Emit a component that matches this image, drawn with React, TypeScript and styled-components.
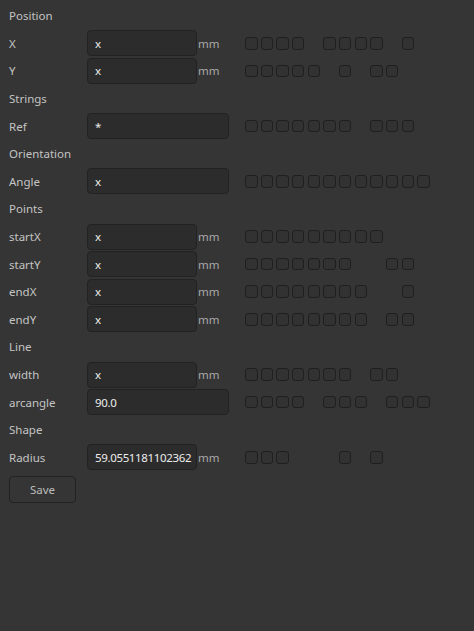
import React from "react";
import styled, { createGlobalStyle } from "styled-components";

const GlobalStyle = createGlobalStyle`
  html, body {
    margin: 0;
    padding: 0;
    background: #353535;
    height: 100%;
  }
  #root {
    min-height: 100%;
  }
`;

type Field = {
  label: string;
  value: string;
  unit?: boolean;
  boxes: number[];
};

type Section = {
  title: string;
  fields: Field[];
};

const range = (a: number, b: number) =>
  Array.from({ length: b - a + 1 }, (_, i) => a + i);

const sections: Section[] = [
  {
    title: "Position",
    fields: [
      { label: "X", value: "x", unit: true, boxes: [...range(0, 3), ...range(5, 8), 10] },
      { label: "Y", value: "x", unit: true, boxes: [...range(0, 4), 6, 8, 9] },
    ],
  },
  {
    title: "Strings",
    fields: [{ label: "Ref", value: "*", boxes: [...range(0, 6), 8, 9, 10] }],
  },
  {
    title: "Orientation",
    fields: [{ label: "Angle", value: "x", boxes: range(0, 11) }],
  },
  {
    title: "Points",
    fields: [
      { label: "startX", value: "x", unit: true, boxes: range(0, 8) },
      { label: "startY", value: "x", unit: true, boxes: [...range(0, 6), 9, 10] },
      { label: "endX", value: "x", unit: true, boxes: [...range(0, 7), 10] },
      { label: "endY", value: "x", unit: true, boxes: [...range(0, 7), 9, 10] },
    ],
  },
  {
    title: "Line",
    fields: [
      { label: "width", value: "x", unit: true, boxes: [...range(0, 6), 8, 9] },
      { label: "arcangle", value: "90.0", boxes: [...range(0, 3), 5, 6, 7, 9, 10, 11] },
    ],
  },
  {
    title: "Shape",
    fields: [
      { label: "Radius", value: "59.0551181102362", unit: true, boxes: [0, 1, 2, 6, 8] },
    ],
  },
];

const Page = styled.div`
  padding: 2px 9px 8px 9px;
  font-family: "Noto Sans", "Open Sans", sans-serif;
  font-size: 11.5px;
  color: #c4c4c4;
`;

const Heading = styled.div`
  height: 27.6px;
  display: flex;
  align-items: center;
`;

const Row = styled.div`
  height: 27.6px;
  display: grid;
  grid-template-columns: 78px 110px 48px 1fr;
  align-items: center;
`;

const Label = styled.span`
  color: #c4c4c4;
`;

const Input = styled.input<{ $wide?: boolean }>`
  box-sizing: border-box;
  width: ${(p) => (p.$wide ? "142px" : "110px")};
  height: 26px;
  grid-column: ${(p) => (p.$wide ? "2 / 4" : "2")};
  margin: 0;
  padding: 0 4px 0 7px;
  background: #2c2c2c;
  border: 1px solid #222222;
  border-radius: 4px;
  color: #ececec;
  font-family: inherit;
  font-size: 11.5px;
  letter-spacing: -0.35px;
  outline: none;
`;

const Unit = styled.span`
  color: #a9a9a9;
  padding-left: 1px;
`;

const Boxes = styled.div`
  grid-column: 4;
  display: grid;
  grid-template-columns: repeat(12, 15.67px);
  align-items: center;
`;

const Box = styled.span<{ $col: number }>`
  grid-column: ${(p) => p.$col + 1};
  grid-row: 1;
  box-sizing: border-box;
  width: 12.5px;
  height: 12.5px;
  border: 1.5px solid #1f1f1f;
  border-radius: 3px;
  background: #323232;
`;

const SaveButton = styled.button`
  margin-top: 5px;
  box-sizing: border-box;
  width: 67px;
  height: 27px;
  background: #353535;
  border: 1px solid #222222;
  border-radius: 4px;
  color: #bdbdbd;
  font-family: inherit;
  font-size: 11.5px;
  padding: 0;
`;

export default function App() {
  return (
    <>
      <GlobalStyle />
      <Page>
        {sections.map((s) => (
          <React.Fragment key={s.title}>
            <Heading>{s.title}</Heading>
            {s.fields.map((f) => (
              <Row key={f.label}>
                <Label>{f.label}</Label>
                <Input $wide={!f.unit} defaultValue={f.value} />
                {f.unit && <Unit>mm</Unit>}
                <Boxes>
                  {f.boxes.map((c) => (
                    <Box key={c} $col={c} />
                  ))}
                </Boxes>
              </Row>
            ))}
          </React.Fragment>
        ))}
        <SaveButton>Save</SaveButton>
      </Page>
    </>
  );
}
